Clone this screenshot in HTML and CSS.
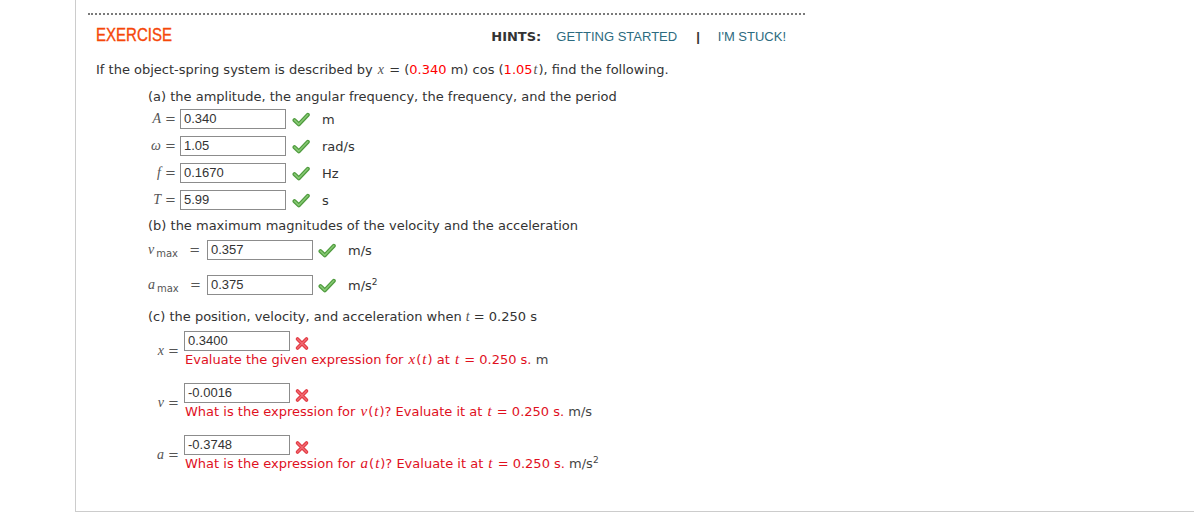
FILE: index.html
```html
<!DOCTYPE html>
<html>
<head>
<meta charset="utf-8">
<link rel="stylesheet" href="styles.css">
</head>
<body>
<div class="panel">
  <div class="exercise">
    <div class="head">
      <span class="title">EXERCISE</span>
      <div class="hints">
        <span class="hints-label">HINTS:</span>
        <a class="hint-link">GETTING STARTED</a>
        <span class="sep">|</span>
        <a class="hint-link">I'M STUCK!</a>
      </div>
    </div>

    <p class="stmt">If the object-spring system is described by <i class="var">x</i> = (<span class="num">0.340</span> m) cos (<span class="num">1.05</span><i class="var">t</i>), find the following.</p>

    <div class="part">
      <p class="part-title">(a) the amplitude, the angular frequency, the frequency, and the period</p>
      <div class="rows-a">
        <div class="row">
          <span class="lbl lbl-a"><i class="var">A</i> =</span>
          <span class="field">0.340</span>
          <svg class="ok" viewBox="0 0 18 15" width="18" height="15"><path d="M2.5 8.2 L6.8 12.3 L15.8 2.8" fill="none" stroke="#4f9b3e" stroke-width="4" stroke-linecap="round" stroke-linejoin="round"/><path d="M2.5 8.2 L6.8 12.3 L15.8 2.8" fill="none" stroke="#86c873" stroke-width="1.6" stroke-linecap="round" stroke-linejoin="round"/></svg>
          <span class="unit">m</span>
        </div>
        <div class="row">
          <span class="lbl lbl-a"><i class="var">ω</i> =</span>
          <span class="field">1.05</span>
          <svg class="ok" viewBox="0 0 18 15" width="18" height="15"><path d="M2.5 8.2 L6.8 12.3 L15.8 2.8" fill="none" stroke="#4f9b3e" stroke-width="4" stroke-linecap="round" stroke-linejoin="round"/><path d="M2.5 8.2 L6.8 12.3 L15.8 2.8" fill="none" stroke="#86c873" stroke-width="1.6" stroke-linecap="round" stroke-linejoin="round"/></svg>
          <span class="unit">rad/s</span>
        </div>
        <div class="row">
          <span class="lbl lbl-a"><i class="var">f</i> =</span>
          <span class="field">0.1670</span>
          <svg class="ok" viewBox="0 0 18 15" width="18" height="15"><path d="M2.5 8.2 L6.8 12.3 L15.8 2.8" fill="none" stroke="#4f9b3e" stroke-width="4" stroke-linecap="round" stroke-linejoin="round"/><path d="M2.5 8.2 L6.8 12.3 L15.8 2.8" fill="none" stroke="#86c873" stroke-width="1.6" stroke-linecap="round" stroke-linejoin="round"/></svg>
          <span class="unit">Hz</span>
        </div>
        <div class="row">
          <span class="lbl lbl-a"><i class="var">T</i> =</span>
          <span class="field">5.99</span>
          <svg class="ok" viewBox="0 0 18 15" width="18" height="15"><path d="M2.5 8.2 L6.8 12.3 L15.8 2.8" fill="none" stroke="#4f9b3e" stroke-width="4" stroke-linecap="round" stroke-linejoin="round"/><path d="M2.5 8.2 L6.8 12.3 L15.8 2.8" fill="none" stroke="#86c873" stroke-width="1.6" stroke-linecap="round" stroke-linejoin="round"/></svg>
          <span class="unit">s</span>
        </div>
      </div>

      <p class="part-title part-b">(b) the maximum magnitudes of the velocity and the acceleration</p>
      <div class="rows-b">
        <div class="row">
          <span class="lbl lbl-b"><i class="var">v</i><sub>max</sub> =</span>
          <span class="field">0.357</span>
          <svg class="ok" viewBox="0 0 18 15" width="18" height="15"><path d="M2.5 8.2 L6.8 12.3 L15.8 2.8" fill="none" stroke="#4f9b3e" stroke-width="4" stroke-linecap="round" stroke-linejoin="round"/><path d="M2.5 8.2 L6.8 12.3 L15.8 2.8" fill="none" stroke="#86c873" stroke-width="1.6" stroke-linecap="round" stroke-linejoin="round"/></svg>
          <span class="unit">m/s</span>
        </div>
        <div class="row">
          <span class="lbl lbl-b"><i class="var">a</i><sub>max</sub> =</span>
          <span class="field">0.375</span>
          <svg class="ok" viewBox="0 0 18 15" width="18" height="15"><path d="M2.5 8.2 L6.8 12.3 L15.8 2.8" fill="none" stroke="#4f9b3e" stroke-width="4" stroke-linecap="round" stroke-linejoin="round"/><path d="M2.5 8.2 L6.8 12.3 L15.8 2.8" fill="none" stroke="#86c873" stroke-width="1.6" stroke-linecap="round" stroke-linejoin="round"/></svg>
          <span class="unit">m/s<sup>2</sup></span>
        </div>
      </div>

      <p class="part-title part-c">(c) the position, velocity, and acceleration when <i class="var">t</i> = 0.250 s</p>
      <div class="rows-c">
        <div class="crow">
          <span class="lbl lbl-c"><i class="var">x</i> =</span>
          <div class="cbody">
            <div class="cinput">
              <span class="field">0.3400</span>
              <svg class="bad" viewBox="0 0 16 15" width="16" height="15"><path d="M3.5 3 L12.5 12 M12.5 3 L3.5 12" stroke="#e23c45" stroke-width="3.6" stroke-linecap="round"/><path d="M3.5 3 L12.5 12 M12.5 3 L3.5 12" stroke="#f26b73" stroke-width="1.2" stroke-linecap="round"/></svg>
            </div>
            <p class="fb">Evaluate the given expression for <i class="fvar">x</i>(<i class="fvar">t</i>) at <i class="fvar">t</i> = 0.250 s. <span class="unit-in">m</span></p>
          </div>
        </div>
        <div class="crow">
          <span class="lbl lbl-c"><i class="var">v</i> =</span>
          <div class="cbody">
            <div class="cinput">
              <span class="field">-0.0016</span>
              <svg class="bad" viewBox="0 0 16 15" width="16" height="15"><path d="M3.5 3 L12.5 12 M12.5 3 L3.5 12" stroke="#e23c45" stroke-width="3.6" stroke-linecap="round"/><path d="M3.5 3 L12.5 12 M12.5 3 L3.5 12" stroke="#f26b73" stroke-width="1.2" stroke-linecap="round"/></svg>
            </div>
            <p class="fb">What is the expression for <i class="fvar">v</i>(<i class="fvar">t</i>)? Evaluate it at <i class="fvar">t</i> = 0.250 s. <span class="unit-in">m/s</span></p>
          </div>
        </div>
        <div class="crow">
          <span class="lbl lbl-c"><i class="var">a</i> =</span>
          <div class="cbody">
            <div class="cinput">
              <span class="field">-0.3748</span>
              <svg class="bad" viewBox="0 0 16 15" width="16" height="15"><path d="M3.5 3 L12.5 12 M12.5 3 L3.5 12" stroke="#e23c45" stroke-width="3.6" stroke-linecap="round"/><path d="M3.5 3 L12.5 12 M12.5 3 L3.5 12" stroke="#f26b73" stroke-width="1.2" stroke-linecap="round"/></svg>
            </div>
            <p class="fb">What is the expression for <i class="fvar">a</i>(<i class="fvar">t</i>)? Evaluate it at <i class="fvar">t</i> = 0.250 s. <span class="unit-in">m/s<sup>2</sup></span></p>
          </div>
        </div>
      </div>
    </div>
  </div>
</div>
</body>
</html>
```
FILE: styles.css
```css
html, body {
  margin: 0;
  padding: 0;
  background: #fff;
  overflow: hidden;
}
body {
  font-family: "DejaVu Sans", Verdana, sans-serif;
  font-size: 13px;
  color: #333;
}
.panel {
  margin-left: 75px;
  height: 512px;
  box-sizing: border-box;
  border-left: 1px solid #ccc;
  border-bottom: 1px solid #ccc;
  padding-top: 13px;
}
.exercise {
  margin-left: 12px;
  width: 717px;
  border-top: 2px dotted #7a7a7a;
}
.head {
  display: flex;
  align-items: baseline;
  justify-content: space-between;
  padding: 10px 19px 0 8px;
  height: 30px;
}
.title {
  display: inline-block;
  font-family: "Liberation Sans", Arial, sans-serif;
  font-size: 18px;
  color: #f5470a;
  transform: scaleX(0.835);
  transform-origin: left center;
  -webkit-text-stroke: 0.35px #f5470a;
}
.hints {
  display: flex;
  align-items: baseline;
}
.hints-label {
  font-family: "DejaVu Sans", Verdana, sans-serif;
  font-weight: bold;
  font-size: 13px;
  color: #333;
  margin-right: 15px;
}
.hint-link {
  font-family: "Liberation Sans", Arial, sans-serif;
  font-size: 13px;
  color: #2d6b80;
}
.sep {
  font-family: "Liberation Sans", Arial, sans-serif;
  font-size: 13px;
  font-weight: bold;
  color: #333;
  margin: 0 18px 0 19px;
}
.stmt {
  margin: 6px 0 0 8px;
  line-height: 18px;
}
.var, .fvar {
  font-family: "Liberation Serif", "Times New Roman", serif;
  font-style: italic;
  font-size: 14px;
  color: #555;
}
.stmt .var { margin: 0 1px; }
.fvar { color: #e0101e; font-size: 15px; margin: 0 1px; }
.num { color: #f00; }
.part {
  margin-left: 60px;
}
.part-title {
  margin: 9px 0 0 0;
  line-height: 18px;
}
.rows-a {
  display: flex;
  flex-direction: column;
  gap: 7px;
  margin-top: 3px;
}
.row {
  display: flex;
  align-items: center;
  height: 20px;
}
.lbl {
  box-sizing: border-box;
  text-align: right;
  padding-right: 4px;
  white-space: nowrap;
  color: #555;
}
.lbl-a { width: 32px; }
.field {
  box-sizing: border-box;
  display: inline-block;
  width: 106px;
  height: 20px;
  border: 1px solid #8c8c8c;
  padding: 0 3px;
  font-family: "Liberation Sans", Arial, sans-serif;
  font-size: 13px;
  line-height: 18px;
  color: #333;
  background: #fff;
}
.ok {
  margin-left: 6px;
  flex: none;
}
.unit {
  margin-left: 12px;
  color: #333;
}
sup {
  font-size: 9px;
  vertical-align: 5px;
  line-height: 0;
}
sub {
  font-size: 10px;
  vertical-align: -3px;
  line-height: 0;
  color: #555;
  margin-left: 2px;
  margin-right: 7px;
}
.part-b { margin-top: 7px; }
.rows-b {
  display: flex;
  flex-direction: column;
  gap: 15px;
  margin-top: 5px;
}
.lbl-b { width: 59px; padding-right: 7px; }
.rows-b .ok { margin-left: 5px; }
.part-c { margin-top: 13px; }
.rows-c {
  display: flex;
  flex-direction: column;
  gap: 15px;
  margin-top: 5px;
}
.crow {
  display: flex;
  align-items: center;
}
.lbl-c { width: 36px; padding-right: 5px; padding-top: 2px; }
.cbody {
  display: flex;
  flex-direction: column;
}
.cinput {
  display: flex;
  align-items: flex-end;
}
.bad {
  margin-left: 4px;
  flex: none;
}
.fb {
  margin: 0 0 0 1px;
  line-height: 17px;
  color: #e0101e;
}
.unit-in { color: #444; }
```
